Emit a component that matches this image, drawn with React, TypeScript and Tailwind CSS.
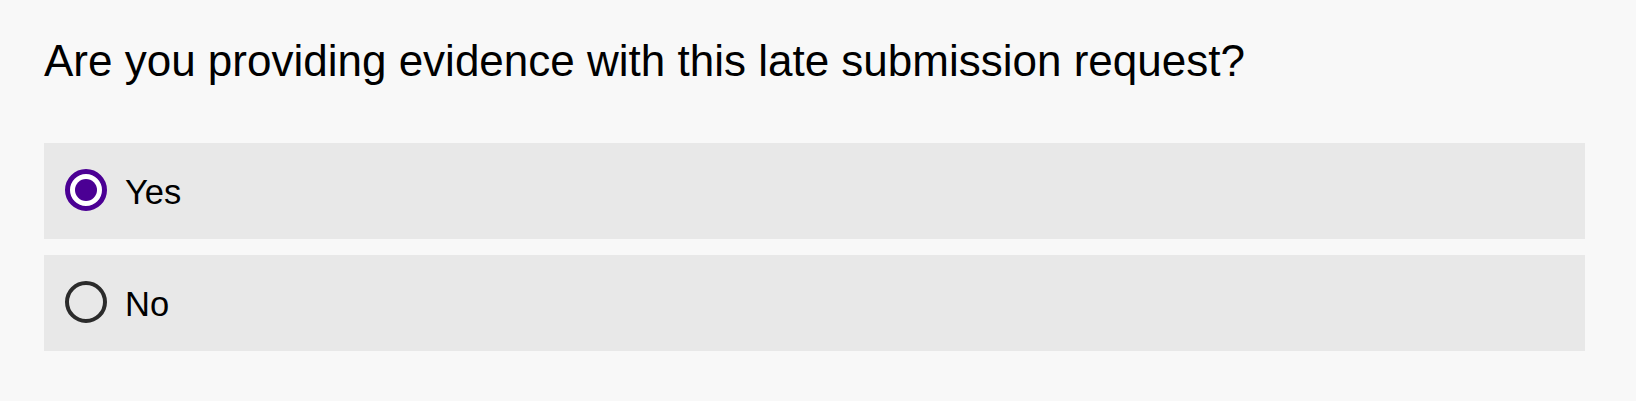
import { useState } from "react"

// ── Options ─────────────────────────────────────────────────────────────────

const OPTIONS = ["Yes", "No"] as const
type Option = typeof OPTIONS[number]

function Radio({ checked }: { checked: boolean }) {
  return checked ? (
    <span className="w-[42px] h-[42px] shrink-0 rounded-full border-[5px] border-[#4b0094] bg-white flex items-center justify-center mb-[3px]">
      <span className="w-[22px] h-[22px] rounded-full bg-[#4b0094]" />
    </span>
  ) : (
    <span className="w-[42px] h-[42px] shrink-0 rounded-full border-[4px] border-[#2b2b2b] mb-[3px]" />
  )
}

export default function App() {
  const [value, setValue] = useState<Option>("Yes")

  return (
    <div
      className="min-h-[401px] bg-[#f8f8f8] pl-[44px] pr-[51px] pt-[36px] text-black"
      style={{ fontFamily: '"Liberation Sans", Arial, sans-serif' }}
    >
      <h1 className="text-[44px] leading-[50px] font-normal mb-[57px]">
        Are you providing evidence with this late submission request?
      </h1>

      <div className="flex flex-col gap-4">
        {OPTIONS.map(opt => (
          <button
            key={opt}
            type="button"
            onClick={() => setValue(opt)}
            className="h-[96px] bg-[#e8e8e8] flex items-center gap-[18px] pl-[21px] text-left"
          >
            <Radio checked={value === opt} />
            <span className="text-[34.5px] leading-[38px] mt-[1px]">{opt}</span>
          </button>
        ))}
      </div>
    </div>
  )
}
